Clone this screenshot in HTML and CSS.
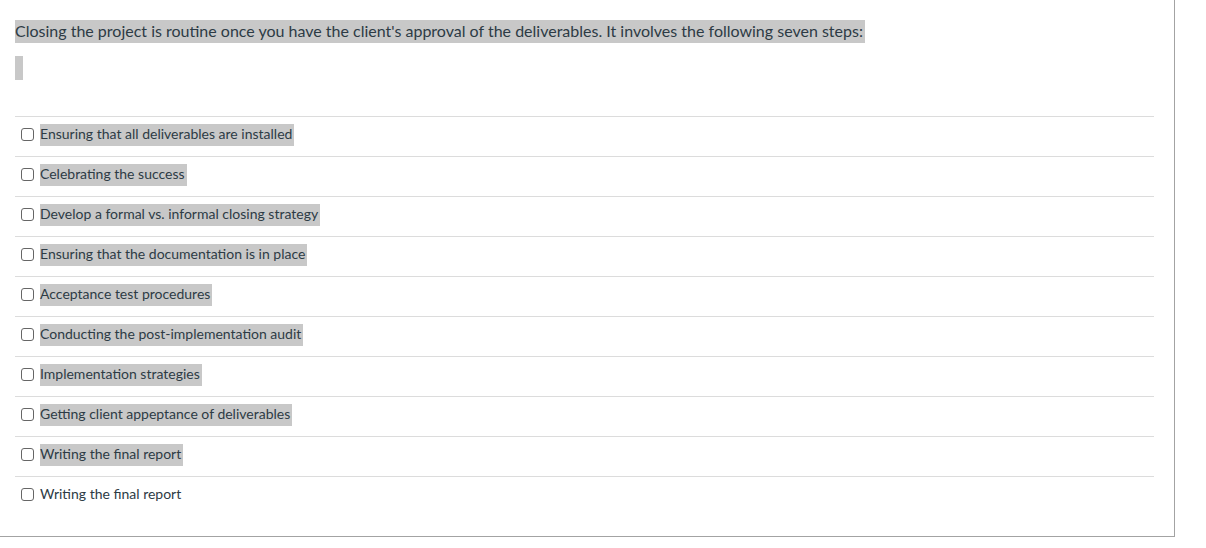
FILE: index.html
```html
<!DOCTYPE html>
<html>
<head>
<meta charset="utf-8">
<link rel="stylesheet" href="styles.css">
</head>
<body>
<div class="frame">
  <p class="prompt"><span class="hl">Closing the project is routine once you have the client's approval of the deliverables. It involves the following seven steps:</span></p>
  <div class="caret"></div>
  <ul class="options">
    <li class="option"><span class="box"></span><span class="label hl">Ensuring that all deliverables are installed</span></li>
    <li class="option"><span class="box"></span><span class="label hl">Celebrating the success</span></li>
    <li class="option"><span class="box"></span><span class="label hl">Develop a formal vs. informal closing strategy</span></li>
    <li class="option"><span class="box"></span><span class="label hl">Ensuring that the documentation is in place</span></li>
    <li class="option"><span class="box"></span><span class="label hl">Acceptance test procedures</span></li>
    <li class="option"><span class="box"></span><span class="label hl">Conducting the post-implementation audit</span></li>
    <li class="option"><span class="box"></span><span class="label hl">Implementation strategies</span></li>
    <li class="option"><span class="box"></span><span class="label hl">Getting client appeptance of deliverables</span></li>
    <li class="option"><span class="box"></span><span class="label hl">Writing the final report</span></li>
    <li class="option last"><span class="box"></span><span class="label">Writing the final report</span></li>
  </ul>
</div>
</body>
</html>
```

FILE: styles.css
```css
html, body {
  margin: 0;
  padding: 0;
  background: #ffffff;
}
body {
  font-family: Lato, "Open Sans", sans-serif;
  color: #2d3b45;
}
.frame {
  box-sizing: border-box;
  width: 1175px;
  height: 537px;
  border-right: 1px solid #a3a3a3;
  border-bottom: 1px solid #a3a3a3;
  padding: 20px 0 0 15px;
}
.prompt {
  margin: 0;
  font-size: 16px;
  height: 23px;
}
.hl {
  background: #c8c8c8;
}
.prompt .hl {
  display: inline-block;
  height: 23px;
  line-height: 21px;
  padding: 0 2px 2px 0;
  box-sizing: border-box;
}
.caret {
  width: 8px;
  height: 24px;
  margin-top: 13px;
  background: #c8c8c8;
}
.options {
  list-style: none;
  margin: 36px 20px 0 0;
  padding: 0;
}
.option {
  display: flex;
  align-items: center;
  border-top: 1px solid #dcdcdc;
  padding: 7px 0 10px 6px;
  font-size: 14px;
}
.box {
  box-sizing: border-box;
  width: 13px;
  height: 13px;
  border: 1px solid #666666;
  border-radius: 3px;
  background: #fff;
  margin-right: 6px;
  margin-top: -1px;
}
.label {
  display: inline-block;
  box-sizing: border-box;
  height: 22px;
  line-height: 20px;
  padding: 0 2px 2px 0;
}
```
